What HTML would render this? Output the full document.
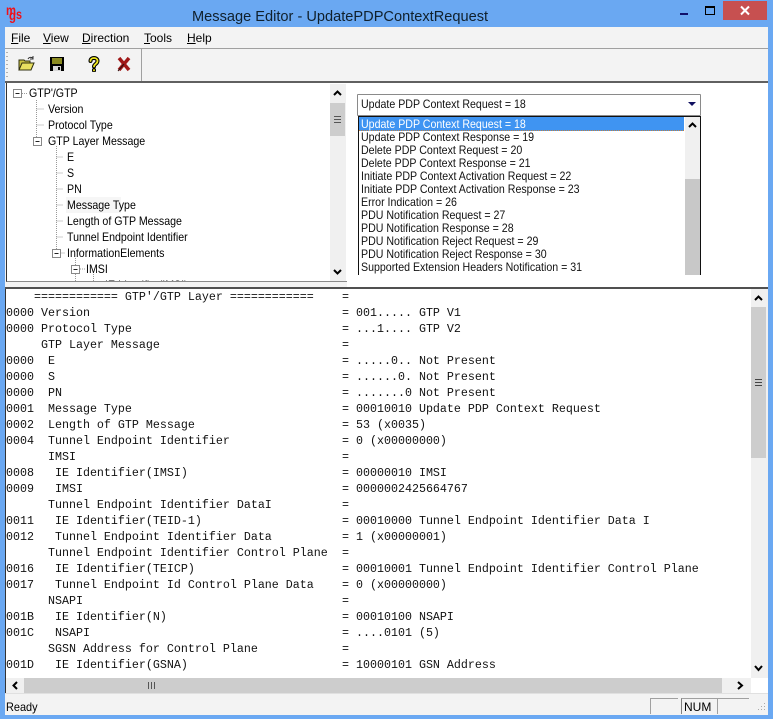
<!DOCTYPE html>
<html><head><meta charset="utf-8">
<style>
html,body{margin:0;padding:0}
body{width:773px;height:719px;position:relative;overflow:hidden;background:#6aa8f2;font-family:"Liberation Sans",sans-serif;color:#000}
div,svg{position:absolute}
.t{white-space:pre;font-size:12px;line-height:14px}
.n{transform:scaleX(.885);transform-origin:0 0}
.m{white-space:pre;font-family:"Liberation Mono",monospace;font-size:11.67px;line-height:16px;top:289px;color:#111}
.h{left:361px;white-space:pre;font-size:12px;line-height:13px;color:#111;transform:scaleX(.885);transform-origin:0 0}
u{text-decoration:underline}
</style></head><body>

<!-- title bar -->
<svg style="left:5px;top:5px" width="20" height="20" viewBox="0 0 20 20" font-family="Liberation Sans" font-size="14" font-weight="bold" fill="#f01018"><text x="1" y="10" textLength="10" lengthAdjust="spacingAndGlyphs">m</text><text x="4" y="15" textLength="7" lengthAdjust="spacingAndGlyphs">g</text><text x="11" y="14" textLength="6" lengthAdjust="spacingAndGlyphs">s</text></svg>
<div class="t" style="left:192px;top:7px;font-size:14.6px;line-height:20px;color:#10202c">Message Editor - UpdatePDPContextRequest</div>
<div style="left:680px;top:13px;width:8px;height:2px;background:#10106a"></div>
<div style="left:705px;top:6px;width:8px;height:6px;border:1px solid #000;border-top-width:2px;background:#6aa8f2"></div>
<div style="left:723px;top:1px;width:44px;height:19px;background:#c75050"></div>
<svg style="left:739px;top:5px" width="12" height="11" viewBox="0 0 12 11"><path d="M2 1.500L10 9.500M10 1.500L2 9.500" stroke="#fff" stroke-width="2"/></svg>

<!-- client -->
<div style="left:5px;top:27px;width:763px;height:688px;background:#f3f3f3"></div>

<!-- menu -->
<div class="t" style="left:11px;top:31px"><u>F</u>ile</div>
<div class="t" style="left:43px;top:31px"><u>V</u>iew</div>
<div class="t" style="left:82px;top:31px"><u>D</u>irection</div>
<div class="t" style="left:144px;top:31px"><u>T</u>ools</div>
<div class="t" style="left:187px;top:31px"><u>H</u>elp</div>
<div style="left:5px;top:48px;width:763px;height:1px;background:#a0a0a0"></div>

<!-- toolbar -->
<div style="left:6px;top:52px;width:2px;height:26px;background:repeating-linear-gradient(#b0b0b0 0 1px,#f3f3f3 1px 4px)"></div>
<div style="left:141px;top:49px;width:1px;height:32px;background:#a0a0a0"></div>
<svg style="left:18px;top:55px" width="18" height="17" viewBox="0 0 18 17"><path d="M1 15V5h5l1 1h5v2" fill="#c8c040" stroke="#303010"/><path d="M1 15L4 8h12l-3 7z" fill="#e8e060" stroke="#303010"/><path d="M10 4c1-2 3-2 5-1M15 1v3h-3" fill="none" stroke="#303030"/></svg>
<svg style="left:49px;top:56px" width="16" height="16" viewBox="0 0 16 16"><rect x="1" y="1" width="14" height="14" fill="#000"/><rect x="3" y="2" width="10" height="6" fill="#8a8a20"/><rect x="4" y="10" width="8" height="5" fill="#d8d8d8"/><rect x="9" y="11" width="2" height="3" fill="#000"/></svg>
<svg style="left:88px;top:56px" width="12" height="16" viewBox="0 0 12 16" fill="none" stroke-linecap="round"><path d="M2.500 5C2.500 1 9.500 1 9.500 5C9.500 8 6 8 6 10.500M6 14v.5" stroke="#000" stroke-width="4"/><path d="M2.500 5C2.500 1 9.500 1 9.500 5C9.500 8 6 8 6 10.500M6 14v.5" stroke="#f0e820" stroke-width="1.800"/></svg>
<svg style="left:116px;top:56px" width="16" height="16" viewBox="0 0 16 16"><path d="M3 2L13 14M13 2L3 14" stroke="#a01818" stroke-width="3.500"/><path d="M2 15L8 8" stroke="#301010" stroke-width="1"/></svg>

<div style="left:5px;top:81px;width:763px;height:2px;background:#606060"></div>

<!-- tree pane -->
<div style="left:6px;top:83px;width:340px;height:198px;background:#fff;border:1px solid #8a8a8a;border-top:none;border-left:1px solid #333"></div>
<div style="left:347px;top:83px;width:421px;height:204px;background:#fff"></div>
<div style="left:6px;top:282px;width:341px;height:5px;background:#f3f3f3"></div>

<svg style="left:7px;top:84px" width="150" height="197" viewBox="0 0 150 197" fill="none" stroke="#999" stroke-dasharray="1 1">
<path d="M15 9.500H21M29.500 16V57M29.500 25H37M29.500 41H37M29.500 57H35M49.500 62V169M49.500 73H56M49.500 89H56M49.500 105H56M49.500 121H56M49.500 137H56M49.500 153H56M49.500 169H58M68.500 174V197M73 185H78M86.500 197V190"/>
</svg>
<svg style="left:7px;top:84px" width="90" height="197" viewBox="0 0 90 197" fill="#fff" stroke="#888">
<rect x="6.500" y="5.500" width="8" height="8"/><path d="M8.500 9.500H12.500" stroke="#222"/>
<rect x="26.500" y="53.500" width="8" height="8"/><path d="M28.500 57.500H32.500" stroke="#222"/>
<rect x="45.500" y="165.500" width="8" height="8"/><path d="M47.500 169.500H51.500" stroke="#222"/>
<rect x="64.500" y="181.500" width="8" height="8"/><path d="M66.500 185.500H70.500" stroke="#222"/>
</svg>

<div class="t n" style="left:29px;top:86px">GTP'/GTP</div>
<div class="t n" style="left:48px;top:102px">Version</div>
<div class="t n" style="left:48px;top:118px">Protocol Type</div>
<div class="t n" style="left:48px;top:134px">GTP Layer Message</div>
<div class="t n" style="left:67px;top:150px">E</div>
<div class="t n" style="left:67px;top:166px">S</div>
<div class="t n" style="left:67px;top:182px">PN</div>
<div style="left:66px;top:197px;width:55px;height:16px;background:#f6f6f6"></div>
<div class="t n" style="left:67px;top:198px">Message Type</div>
<div class="t n" style="left:67px;top:214px">Length of GTP Message</div>
<div class="t n" style="left:67px;top:230px">Tunnel Endpoint Identifier</div>
<div class="t n" style="left:67px;top:246px">InformationElements</div>
<div class="t n" style="left:86px;top:262px">IMSI</div>
<div style="left:100px;top:275px;width:100px;height:6px;overflow:hidden"><div class="t n" style="left:5px;top:3px">IE Identifier(IMSI)</div></div>

<!-- tree scrollbar -->
<div style="left:330px;top:84px;width:16px;height:197px;background:#f0f0f0"></div>
<div style="left:330px;top:103px;width:15px;height:33px;background:#cdcdcd"></div>
<svg style="left:330px;top:84px" width="15" height="197" viewBox="0 0 15 197"><path d="M4 11L7.500 7.500L11 11M4 186L7.500 189.500L11 186" fill="none" stroke="#000" stroke-width="2"/><path d="M4 32.500h7M4 35.500h7M4 38.500h7" stroke="#555"/></svg>

<!-- combo -->
<div style="left:357px;top:94px;width:342px;height:20px;background:#fff;border:1px solid #8a8a8a;border-radius:1px"></div>
<div class="h" style="top:98px">Update PDP Context Request = 18</div>
<svg style="left:688px;top:102px" width="9" height="5"><path d="M0 0H8L4 4z" fill="#101060"/></svg>

<!-- list -->
<div style="left:358px;top:116px;width:343px;height:159px;background:#fff;border:1px solid #111;border-bottom:none;box-sizing:border-box"></div>
<div style="left:359px;top:117px;width:325px;height:14px;background:#3f94f2;border-bottom:1px dotted #c08040;box-sizing:border-box"></div>
<div style="left:685px;top:117px;width:15px;height:158px;background:#c8c8c8"></div>
<div style="left:685px;top:117px;width:15px;height:62px;background:#f0f0f0"></div>
<svg style="left:685px;top:117px" width="15" height="16"><path d="M4 10L7.500 6.500L11 10" fill="none" stroke="#000" stroke-width="2"/></svg>
<div class="h" style="top:118px;color:#fff">Update PDP Context Request = 18</div>
<div class="h" style="top:131px">Update PDP Context Response = 19</div>
<div class="h" style="top:144px">Delete PDP Context Request = 20</div>
<div class="h" style="top:157px">Delete PDP Context Response = 21</div>
<div class="h" style="top:170px">Initiate PDP Context Activation Request = 22</div>
<div class="h" style="top:183px">Initiate PDP Context Activation Response = 23</div>
<div class="h" style="top:196px">Error Indication = 26</div>
<div class="h" style="top:209px">PDU Notification Request = 27</div>
<div class="h" style="top:222px">PDU Notification Response = 28</div>
<div class="h" style="top:235px">PDU Notification Reject Request = 29</div>
<div class="h" style="top:248px">PDU Notification Reject Response = 30</div>
<div class="h" style="top:261px">Supported Extension Headers Notification = 31</div>

<!-- splitter -->
<div style="left:5px;top:287px;width:763px;height:2px;background:#505050"></div>

<!-- text pane -->
<div style="left:5px;top:289px;width:763px;height:404px;background:#fff"></div>
<div style="left:5px;top:289px;width:1px;height:404px;background:#333"></div>
<div class="m" style="left:6px">    ============ GTP'/GTP Layer ============
0000 Version
0000 Protocol Type
     GTP Layer Message
0000  E
0000  S
0000  PN
0001  Message Type
0002  Length of GTP Message
0004  Tunnel Endpoint Identifier
      IMSI
0008   IE Identifier(IMSI)
0009   IMSI
      Tunnel Endpoint Identifier DataI
0011   IE Identifier(TEID-1)
0012   Tunnel Endpoint Identifier Data
      Tunnel Endpoint Identifier Control Plane
0016   IE Identifier(TEICP)
0017   Tunnel Endpoint Id Control Plane Data
      NSAPI
001B   IE Identifier(N)
001C   NSAPI
      SGSN Address for Control Plane
001D   IE Identifier(GSNA)</div>
<div class="m" style="left:342px">=
= 001..... GTP V1
= ...1.... GTP V2
=
= .....0.. Not Present
= ......0. Not Present
= .......0 Not Present
= 00010010 Update PDP Context Request
= 53 (x0035)
= 0 (x00000000)
=
= 00000010 IMSI
= 0000002425664767
=
= 00010000 Tunnel Endpoint Identifier Data I
= 1 (x00000001)
=
= 00010001 Tunnel Endpoint Identifier Control Plane
= 0 (x00000000)
=
= 00010100 NSAPI
= ....0101 (5)
=
= 10000101 GSN Address</div>

<!-- v scrollbar -->
<div style="left:751px;top:289px;width:17px;height:389px;background:#f0f0f0"></div>
<div style="left:751px;top:307px;width:15px;height:151px;background:#cdcdcd"></div>
<svg style="left:751px;top:289px" width="17" height="389" viewBox="0 0 17 389"><path d="M4 11L7.500 7.500L11 11M4 377L7.500 381L11 377" fill="none" stroke="#000" stroke-width="2"/><path d="M4 90.500h7M4 93.500h7M4 96.500h7" stroke="#444"/></svg>

<!-- h scrollbar -->
<div style="left:6px;top:678px;width:745px;height:15px;background:#f0f0f0"></div>
<div style="left:24px;top:678px;width:698px;height:15px;background:#cdcdcd"></div>
<svg style="left:6px;top:678px" width="745" height="15" viewBox="0 0 745 15"><path d="M11 4L7.500 7.500L11 11M732 4L736 7.500L732 11" fill="none" stroke="#000" stroke-width="2"/><path d="M142.500 4v7M145.500 4v7M148.500 4v7" stroke="#555"/></svg>
<div style="left:5px;top:693px;width:763px;height:1px;background:#e0e0e0"></div>

<!-- status -->
<div class="t" style="left:6px;top:700px;transform:scaleX(.91);transform-origin:0 0">Ready</div>
<div style="left:650px;top:698px;width:27px;height:15px;border-left:1px solid #a0a0a0;border-top:1px solid #a0a0a0"></div>
<div style="left:681px;top:698px;width:35px;height:15px;border-left:1px solid #808080;border-top:1px solid #a0a0a0;border-right:1px solid #a0a0a0"></div>
<div class="t" style="left:684px;top:700px">NUM</div>
<div style="left:717px;top:698px;width:31px;height:15px;border-left:1px solid #a0a0a0;border-top:1px solid #a0a0a0"></div>
<svg style="left:755px;top:702px" width="12" height="11"><path d="M9.500 1v1M6.500 4v1M9.500 4v1M3.500 7v1M6.500 7v1M9.500 7v1" stroke="#aaa"/></svg>
</body></html>
